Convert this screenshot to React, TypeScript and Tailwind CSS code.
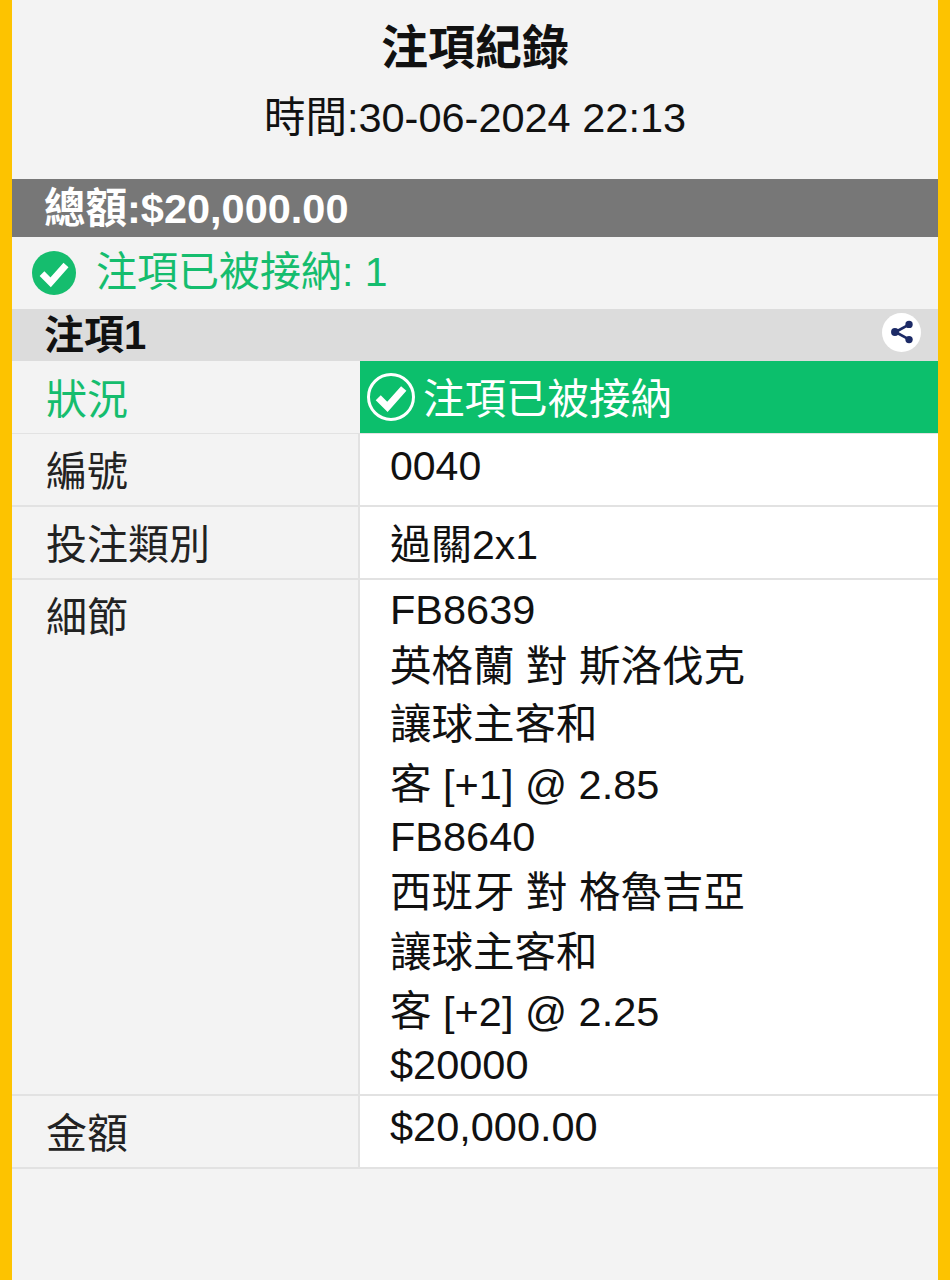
import type { ReactNode } from "react";

const font = "font-['Liberation_Sans','Noto_Sans_CJK_TC',sans-serif]";

type RowProps = {
  label: string;
  children: ReactNode;
  labelClass?: string;
  valueClass?: string;
  rowClass?: string;
};

function Row({
  label,
  children,
  labelClass = "pt-[9px] text-[#222]",
  valueClass = "border-l-2 border-[#e2e2e2] bg-white pl-[30px] text-[#111]",
  rowClass = "h-[73px] border-b-2",
}: RowProps) {
  return (
    <div className={`flex border-[#e2e2e2] ${rowClass}`}>
      <div className={`w-[346px] pl-[34px] text-[41px] leading-[58px] ${labelClass}`}>{label}</div>
      <div className={`flex-1 ${valueClass}`}>{children}</div>
    </div>
  );
}

function CheckMark({ size, stroke = "#fff" }: { size: number; stroke?: string }) {
  return (
    <svg width={size} height={size} viewBox="0 0 24 24" fill="none">
      <path d="M3 12.5 9.5 19 21 6" stroke={stroke} strokeWidth="5" strokeLinecap="butt" strokeLinejoin="miter" />
    </svg>
  );
}

function ShareIcon() {
  return (
    <svg viewBox="0 0 24 24" className="h-[26px] w-[26px]" fill="#1c2a66" stroke="#1c2a66" strokeWidth="2.4">
      <line x1="6" y1="12" x2="18" y2="5.5" />
      <line x1="6" y1="12" x2="18" y2="18.5" />
      <circle cx="5.5" cy="12" r="3.6" stroke="none" />
      <circle cx="18.5" cy="5" r="3.4" stroke="none" />
      <circle cx="18.5" cy="19" r="3.4" stroke="none" />
    </svg>
  );
}

export default function App() {
  return (
    <div className={`flex h-[1280px] w-[950px] overflow-hidden bg-[#f3f3f3] ${font}`}>
      <div className="w-3 bg-[#fdc300]" />
      <div className="flex-1">
        <div className="flex h-[179px] flex-col items-center text-[#111]">
          <h1 className="mt-[15px] text-[47px] font-bold leading-[66px]">注項紀錄</h1>
          <p className="mt-[8px] text-[41.5px] leading-[58px]">時間:30-06-2024 22:13</p>
        </div>
        <div className="flex h-[58px] items-center bg-[#777777] pl-[32px] pt-[2px] text-[41.5px] font-bold text-white">
          總額:$20,000.00
        </div>
        <div className="flex h-[72px] items-center pl-5 text-[41px] text-[#15bd6e]">
          <span className="flex h-[44px] w-[44px] items-center justify-center rounded-full bg-[#15bd6e]">
            <CheckMark size={32} />
          </span>
          <span className="ml-5">注項已被接納: 1</span>
        </div>
        <div className="flex h-[52px] items-center justify-between bg-[#dcdcdc] pl-[32px] pr-[17px] text-[40px] font-bold text-[#111]">
          <span>注項1</span>
          <span className="mb-[6px] flex h-[39px] w-[39px] items-center justify-center rounded-full bg-white">
            <ShareIcon />
          </span>
        </div>
        <Row
          label="狀況"
          labelClass="pt-[10px] text-[#15bd6e]"
          rowClass="h-[73px] border-b"
          valueClass="ml-[2px] flex items-center bg-[#0cbf6c] pl-[7px] text-white"
        >
          <span className="flex h-[48px] w-[48px] items-center justify-center rounded-full border-[3px] border-white">
            <CheckMark size={34} />
          </span>
          <span className="ml-[8px] pt-[7px] text-[41.5px]">注項已被接納</span>
        </Row>
        <Row label="編號">
          <div className="pt-[3px] text-[41px] leading-[58px]">0040</div>
        </Row>
        <Row label="投注類別">
          <div className="pt-[9px] text-[41px] leading-[58px]">過關2x1</div>
        </Row>
        <Row label="細節" rowClass="h-[516px] border-b-2">
          <div className="pt-[1px] text-[41.5px]">
            <div className="h-[56px] leading-[58px]">FB8639</div>
            <div className="h-[58px] leading-[60px]">英格蘭 對 斯洛伐克</div>
            <div className="h-[60px] leading-[60px]">讓球主客和</div>
            <div className="h-[60px] leading-[60px]">客 [+1] @ 2.85</div>
            <div className="h-[48px] leading-[44px]">FB8640</div>
            <div className="h-[60px] leading-[60px]">西班牙 對 格魯吉亞</div>
            <div className="h-[59px] leading-[60px]">讓球主客和</div>
            <div className="h-[57px] leading-[60px]">客 [+2] @ 2.25</div>
            <div className="h-[50px] leading-[52px]">$20000</div>
          </div>
        </Row>
        <Row label="金額">
          <div className="pt-[2px] text-[41.5px] leading-[58px]">$20,000.00</div>
        </Row>
      </div>
      <div className="w-3 bg-[#fdc300]" />
    </div>
  );
}
